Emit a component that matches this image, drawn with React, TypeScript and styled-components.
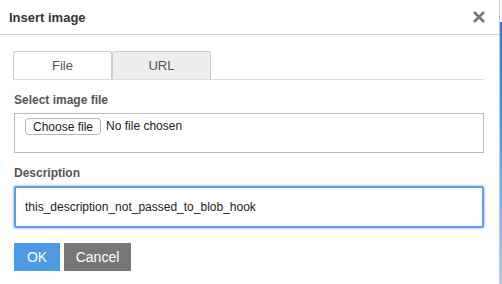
import React from 'react';
import styled, { createGlobalStyle } from 'styled-components';

const GlobalStyle = createGlobalStyle`
  *, *::before, *::after {
    box-sizing: border-box;
  }
  html, body {
    margin: 0;
    padding: 0;
    background: #fff;
    font-family: 'Liberation Sans', Arial, sans-serif;
  }
`;

const Page = styled.div`
  display: flex;
  width: 502px;
  height: 284px;
  overflow: hidden;
`;

const Dialog = styled.div`
  width: 500px;
  height: 284px;
  border-right: 1px solid #c8c8c8;
  background: #fff;
  display: flex;
  flex-direction: column;
`;

const Backdrop = styled.div`
  flex: 1;
  margin-top: 22px;
  background: linear-gradient(180deg, #2a7ad6 0%, #4d9be6 40%, #a9cdf1 100%);
`;

const Header = styled.div`
  height: 35px;
  border-bottom: 1px solid #cccccc;
  display: flex;
  align-items: center;
  justify-content: space-between;
  padding: 0 14px 0 9px;
`;

const Title = styled.div`
  font-size: 13px;
  font-weight: bold;
  color: #333;
`;

const Close = styled.button`
  border: none;
  background: none;
  padding: 0;
  width: 12px;
  height: 12px;
  display: flex;
  cursor: pointer;
`;

const Body = styled.div`
  padding: 16px 15px 0 13px;
  display: flex;
  flex-direction: column;
`;

const TabBar = styled.div`
  display: flex;
  border-bottom: 1px solid #dddddd;
`;

const Tab = styled.div<{ $active?: boolean }>`
  width: 99px;
  height: 28px;
  border: 1px solid #cccccc;
  border-bottom: none;
  border-radius: 3px 3px 0 0;
  background: ${(p) => (p.$active ? '#fff' : '#eeeeee')};
  color: #555;
  font-size: 13px;
  display: flex;
  align-items: center;
  justify-content: center;
`;

const Label = styled.div`
  font-size: 12px;
  font-weight: bold;
  color: #555;
  margin: 13px 0 0 1px;
  height: 14px;
`;

const FileBox = styled.div`
  margin: 6px 0 0 1px;
  height: 40px;
  border: 1px solid #bbbbbb;
  padding: 4px 10px 0;
  display: flex;
  align-items: flex-start;
  gap: 5px;
`;

const ChooseButton = styled.div`
  height: 17px;
  padding: 0 7px;
  border: 1px solid #b5b5b5;
  border-radius: 4px;
  background: #fff;
  font-size: 12px;
  color: #222;
  display: flex;
  align-items: center;
`;

const FileText = styled.div`
  font-size: 12px;
  color: #222;
  line-height: 17px;
`;

const TextInput = styled.div`
  margin: 6px 0 0 1px;
  height: 42px;
  border: 2px solid #5c9fe8;
  border-radius: 2px;
  box-shadow: 0 0 2px 1px rgba(92, 159, 232, 0.45);
  padding: 0 9px;
  font-size: 12px;
  color: #222;
  display: flex;
  align-items: center;
`;

const Actions = styled.div`
  display: flex;
  gap: 4px;
  margin: 15px 0 0 1px;
`;

const Button = styled.div<{ $primary?: boolean; $width: number }>`
  width: ${(p) => p.$width}px;
  height: 28px;
  background: ${(p) => (p.$primary ? '#4d9be3' : '#777777')};
  color: #fff;
  font-size: 14px;
  display: flex;
  align-items: center;
  justify-content: center;
`;

export default function App() {
  return (
    <>
      <GlobalStyle />
      <Page>
        <Dialog>
          <Header>
            <Title>Insert image</Title>
            <Close aria-label="Close">
              <svg width="12" height="12" viewBox="0 0 12 12">
                <path d="M1 1L11 11M11 1L1 11" stroke="#777" strokeWidth="2.6" />
              </svg>
            </Close>
          </Header>
          <Body>
            <TabBar>
              <Tab $active>File</Tab>
              <Tab>URL</Tab>
            </TabBar>
            <Label>Select image file</Label>
            <FileBox>
              <ChooseButton>Choose file</ChooseButton>
              <FileText>No file chosen</FileText>
            </FileBox>
            <Label>Description</Label>
            <TextInput>this_description_not_passed_to_blob_hook</TextInput>
            <Actions>
              <Button $primary $width={46}>OK</Button>
              <Button $width={67}>Cancel</Button>
            </Actions>
          </Body>
        </Dialog>
        <Backdrop />
      </Page>
    </>
  );
}
